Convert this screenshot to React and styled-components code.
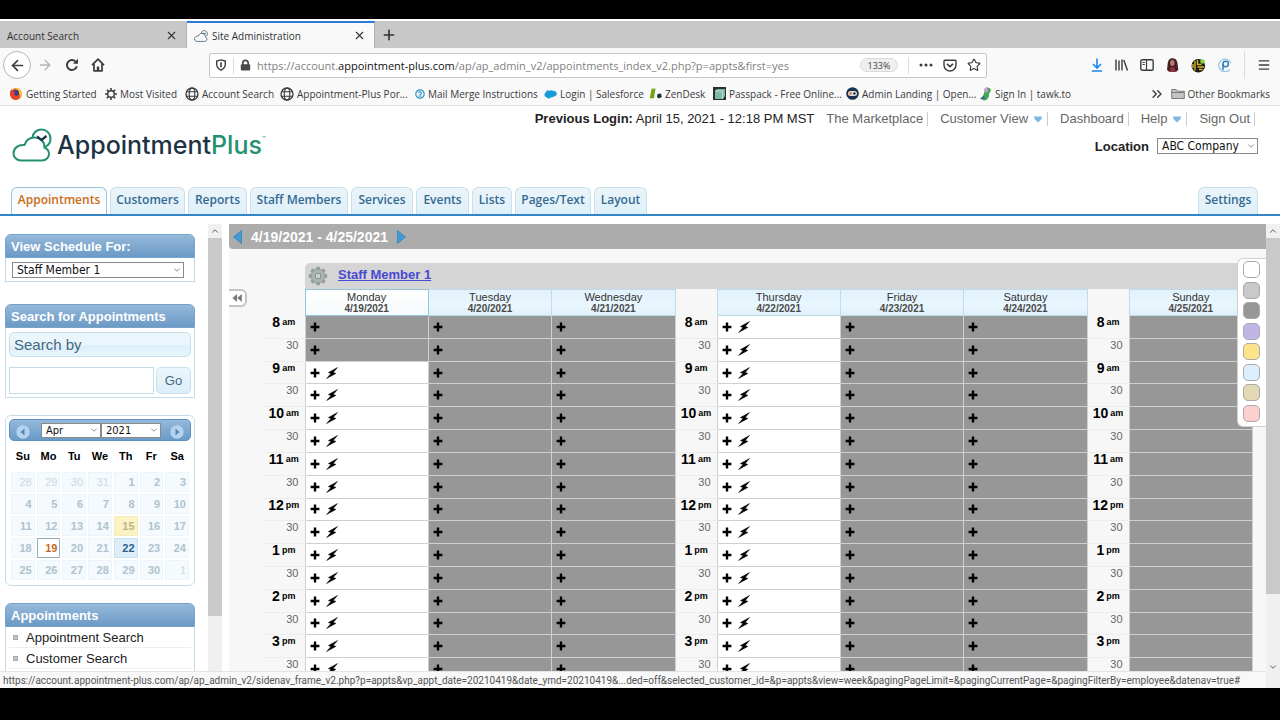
import React from "react";
import styled, { createGlobalStyle, css } from "styled-components";
import { ArrowLeft, ArrowRight, X, Plus, Star, Menu, ChevronDown, ChevronUp, ChevronsRight } from "lucide-react";

const ui = `"Open Sans", "Noto Sans", sans-serif`;
const arial = `"Liberation Sans", Arial, sans-serif`;
const tahoma = `"DejaVu Sans Condensed", "DejaVu Sans", sans-serif`;

const Global = createGlobalStyle`
  *, *::before { box-sizing: border-box; }
  body { margin: 0; background: #000; font-family: ${arial}; font-size: 13px; color: #222; }
  button, input, select { font: inherit; color: inherit; margin: 0; padding: 0; }
  button { background: none; border: 0; display: inline-flex; align-items: center; justify-content: center; }
  a { color: inherit; text-decoration: none; }
  svg { display: block; flex: none; }
  h2, ul { margin: 0; padding: 0; }
`;

const Screen = styled.div`
  height: 100vh;
  padding: 19px 0 32px;
  display: flex;
  flex-direction: column;
`;
const Window = styled.div`
  flex: 1;
  min-height: 0;
  display: flex;
  flex-direction: column;
  position: relative;
  overflow: hidden;
  background: #fff;
`;

/* ---------- browser chrome ---------- */
const TabStrip = styled.div`
  margin-top: 2px;
  height: 27px;
  flex: none;
  display: flex;
  background: #c8c8c8;
  font: 10px ${ui};
  color: #333;
`;
const BrowserTab = styled.div`
  width: ${(p) => (p.$active ? 188 : 187)}px;
  padding: 0 8px 0 7px;
  display: flex;
  align-items: center;
  gap: 4px;
  border-top: 2px solid ${(p) => (p.$active ? "#2a7bd8" : "transparent")};
  background: ${(p) => (p.$active ? "#f9f9fa" : "transparent")};
  border-right: 1px solid #b0b0b0;
  span { flex: 1; }
`;
const NewTab = styled.button`
  width: 27px;
`;
const Toolbar = styled.div`
  height: 34px;
  flex: none;
  display: flex;
  align-items: center;
  background: #f9f9fa;
  color: #3c3c3d;
  padding-left: 3px;
  padding-right: 9px;
`;
const NavButtons = styled.div`
  width: 206px;
  display: flex;
  align-items: center;
  gap: 12px;
`;
const BackButton = styled.button`
  width: 28px;
  height: 28px;
  margin-right: -6px;
  border: 1px solid #b5b5b5;
  border-radius: 50%;
  background: #fff;
`;
const AddressBar = styled.div`
  flex: 1;
  max-width: 778px;
  height: 25px;
  display: flex;
  align-items: center;
  gap: 10px;
  padding: 0 5px 0 5px;
  border: 1px solid #c6c6c6;
  border-radius: 2px;
  background: #fff;
  font: 11px ${ui};
  color: #808080;
`;
const Address = styled.div`
  flex: 1;
  min-width: 0;
  display: flex;
  align-items: center;
  gap: 6px;
  b { font-weight: 400; color: #111; }
  p { flex: 1; margin: 0; white-space: nowrap; overflow: hidden; }
`;
const ThinRule = styled.i`
  width: 1px;
  height: ${(p) => p.$h}px;
  background: #dcdcdc;
`;
const ZoomPill = styled.button`
  width: 38px;
  height: 14px;
  border: 1px solid #dadada;
  border-radius: 7px;
  background: #efefef;
  font-size: 9px;
  color: #444;
`;
const ToolIcons = styled.div`
  margin-left: auto;
  display: flex;
  align-items: center;
  gap: 12px;
`;
const Bookmarks = styled.div`
  height: 24px;
  flex: none;
  display: flex;
  align-items: center;
  background: #f9f9fa;
  border-bottom: 1px solid #e2e2e2;
  padding: 0 10px 0 9px;
  font: 10px ${ui};
  color: #3a3a3a;
`;
const Bookmark = styled.a`
  display: flex;
  align-items: center;
  gap: 3px;
  white-space: nowrap;
  width: ${(p) => (p.$w ? p.$w + "px" : "auto")};
`;
const Spacer = styled.div`
  flex: 1;
`;

/* ---------- site header ---------- */
const Header = styled.header`
  height: 110px;
  flex: none;
  display: flex;
  flex-direction: column;
  border-bottom: 2px solid #3385c6;
`;
const HeaderTop = styled.div`
  flex: 1;
  display: flex;
  justify-content: space-between;
`;
const Logo = styled.a`
  display: flex;
  align-items: center;
  align-self: flex-start;
  gap: 5px;
  margin: 21px 0 0 12px;
  font: 500 25px/36px Inter, sans-serif;
  color: #1d3344;
  em { font-style: normal; color: #259072; }
  sup { font-size: 6px; line-height: 6px; vertical-align: 13px; color: #259072; }
`;
const HeaderRight = styled.div`
  display: flex;
  flex-direction: column;
  align-items: flex-end;
  padding-top: 5px;
`;
const UtilityNav = styled.nav`
  display: flex;
  align-items: center;
  line-height: 16px;
  color: #666;
  padding-right: 25px;
`;
const LastLogin = styled.span`
  color: #222;
  margin-right: 12px;
`;
const UtilityLink = styled.a`
  display: flex;
  align-items: center;
  gap: 5px;
  padding-right: 4px;
  border-right: 1px solid #ccc;
  line-height: 14px;
  & + & { padding-left: 12px; }
`;
const LocationRow = styled.label`
  display: flex;
  align-items: center;
  gap: 8px;
  margin: 11px 22px 0 0;
  font-weight: 700;
`;
const SelectBox = styled.span`
  position: relative;
  display: block;
  width: ${(p) => p.$w};
  svg { position: absolute; right: 2px; top: 50%; margin-top: -5px; pointer-events: none; color: #777; }
`;
const Select = styled.select`
  appearance: none;
  display: block;
  width: 100%;
  height: ${(p) => p.$h || 16}px;
  padding: 0 4px;
  border: 1px solid #8a8a8a;
  border-radius: 0;
  background: #fff;
  color: #111;
  font: 400 ${(p) => p.$size || 12}px ${tahoma};
`;
const SiteTabs = styled.nav`
  display: flex;
  gap: 3px;
  padding: 0 22px 0 11px;
`;
const SiteTab = styled.a`
  width: ${(p) => p.$w}px;
  height: 27px;
  display: flex;
  align-items: center;
  justify-content: center;
  padding-bottom: 4px;
  border: 1px solid #c9dfea;
  border-bottom: 0;
  border-radius: 6px 6px 0 0;
  background: linear-gradient(#ebf4f9, #dff0fa);
  font: 600 12px ${ui};
  color: #336a93;
  ${(p) =>
    p.$active &&
    css`
      color: #cf6c16;
      border-color: #9cc3dd;
      background: linear-gradient(#f3f9fc, #fff);
    `}
  ${(p) => p.$end && css`margin-left: auto;`}
`;

/* ---------- frames ---------- */
const Frames = styled.div`
  flex: 1;
  min-height: 0;
  padding-top: 8px;
  display: flex;
`;
const Sidebar = styled.aside`
  width: 208px;
  padding: 10px 13px 0 5px;
  overflow: hidden;
`;
const Scroll = styled.div`
  width: ${(p) => p.$w}px;
  flex: none;
  display: flex;
  flex-direction: column;
  align-items: center;
  background: #f0f0f0;
  color: #444;
  margin-right: ${(p) => p.$gap || 0}px;
  padding-bottom: 14px;
  svg { margin: 2px 0; }
`;
const Thumb = styled.div`
  width: 100%;
  height: ${(p) => p.$h};
  background: #c9c9c9;
  margin-bottom: auto;
`;
const Panel = styled.section`
  margin-bottom: ${(p) => p.$gap}px;
`;
const PanelTitle = styled.h2`
  height: 24px;
  padding: 0 5px;
  border-radius: 6px 6px 0 0;
  background: linear-gradient(#95b9da, #6b9ac6);
  border: 1px solid #76a4c8;
  font-size: 13px;
  line-height: 24px;
  color: #fff;
`;
const PanelBody = styled.div`
  border: 1px solid #c3dcea;
  border-top: 0;
  padding: ${(p) => p.$pad};
`;
const SearchBy = styled.button`
  width: 100%;
  height: 25px;
  justify-content: flex-start;
  padding: 0 4px;
  border: 1px solid #c9e0ec;
  border-radius: 5px;
  background: linear-gradient(#ebf6fc 0 50%, #dceffa 55%, #e8f5fd);
  font-size: 15px;
  color: #44687f;
`;
const SearchRow = styled.div`
  display: flex;
  gap: 2px;
  margin-top: 10px;
`;
const SearchInput = styled.input`
  flex: 1;
  min-width: 0;
  height: 27px;
  border: 1px solid #c3dcea;
  background: #fff;
`;
const GoButton = styled.button`
  width: 35px;
  border: 1px solid #c9e0ec;
  border-radius: 5px;
  background: linear-gradient(#eaf6fd, #dbeef9);
  color: #44687f;
`;
const DatePicker = styled.section`
  height: 171px;
  margin-bottom: 17px;
  padding: 3px;
  border: 1px solid #c3dcea;
  border-radius: 6px;
`;
const PickerHead = styled.div`
  height: 22px;
  padding: 0 6px;
  display: flex;
  align-items: center;
  border-radius: 5px;
  border: 1px solid #5c93c4;
  background: linear-gradient(#94b9db, #6a9ac7);
  button { margin-top: 3px; }
  button:first-child { margin-right: 11px; }
  button:last-child { margin-left: auto; }
`;
const MonthTable = styled.table`
  width: 100%;
  table-layout: fixed;
  border-collapse: separate;
  border-spacing: 2px;
  font-size: 11px;
  color: #000;
  th { height: 27px; padding: 0 0 2px; }
`;
const Day = styled.td`
  height: 20px;
  padding: 0 2px 0 0;
  text-align: right;
  font-size: 11px;
  font-weight: ${(p) => (p.$kind === "out" ? 400 : 700)};
  color: ${(p) => (p.$kind === "out" ? "#ccd9e0" : "#afc3cf")};
  background: #f4fafd;
  border: 1px solid #eef5f9;
  ${(p) => p.$kind === "today" && css`background: #fbf3c4; color: #bdb391; border-color: #f6ecb8;`}
  ${(p) => p.$kind === "picked" && css`background: #fff; color: #c46a1c; border-color: #8fb3c4;`}
  ${(p) => p.$kind === "link" && css`background: #dceefa; color: #2c5d88; border-color: #c8e0ee;`}
`;
const LinkList = styled.ul`
  list-style: none;
  border: 1px solid #c3dcea;
  border-top: 0;
  li {
    height: 21px;
    display: flex;
    align-items: center;
    gap: 8px;
    margin: 0 3px;
    padding-left: 4px;
    border-bottom: 1px solid #eee;
  }
  li::before { content: ""; width: 5px; height: 5px; background: #c4c4c4; border: 1px solid #aaa; }
`;

/* ---------- schedule ---------- */
const Main = styled.main`
  flex: 1;
  min-width: 0;
  position: relative;
  overflow: hidden;
  background: #f7f7f7;
`;
const WeekBar = styled.div`
  height: 25px;
  display: flex;
  align-items: center;
  gap: 9px;
  padding-left: 4px;
  border-radius: 0 0 0 4px;
  background: #acacac;
  color: #fff;
  font-weight: 700;
  font-size: 14px;
`;
const Schedule = styled.div`
  display: flex;
  padding: 14px 13px 0 0;
`;
const Gutter = styled.div`
  width: 34px;
  padding-top: 26px;
`;
const Collapse = styled.button`
  width: 18px;
  height: 18px;
  border: 2px solid #c4c4c4;
  border-left: 0;
  border-radius: 0 6px 6px 0;
  background: #fff;
  color: #777;
`;
const Board = styled.div`
  flex: 1;
`;
const StaffBar = styled.div`
  height: 26px;
  margin-left: 42px;
  padding-left: 3px;
  display: flex;
  align-items: center;
  gap: 10px;
  border-radius: 5px 0 0 0;
  background: #d5d5d5;
  a { font-weight: 700; color: #4a48d4; text-decoration: underline; line-height: 16px; padding-bottom: 2px; }
`;
const WeekTable = styled.table`
  width: 100%;
  height: 392px;
  table-layout: fixed;
  border-collapse: collapse;
`;
const TimeCol = styled.col`
  width: 42px;
`;
const DayHead = styled.th`
  height: 26px;
  padding: 0;
  border: 1px solid ${(p) => (p.$active ? "#93c5dd" : "#bddcec")};
  background: ${(p) => (p.$active ? "linear-gradient(#fff, #f4fafc)" : "linear-gradient(#e2f2fb, #e9f6fd 60%, #dff0fa)")};
  font-size: 11px;
  font-weight: 400;
  line-height: 12px;
  color: #333;
  time { display: block; font-size: 10px; font-weight: 700; color: #4a4a4a; }
`;
const Slot = styled.td`
  padding: 0 0 0 4px;
  border: 1px solid #cfcfcf;
  background: ${(p) => (p.$open ? "#fff" : "#979797")};
  div { display: flex; gap: 6px; align-items: center; height: 14px; }
`;
const TimeCell = styled.th`
  padding: 0 6px 0 0;
  border-bottom: 1px solid #ededed;
  vertical-align: top;
  text-align: right;
  font-size: 11px;
  font-weight: 400;
  line-height: 13px;
  color: #666;
  ${(p) =>
    p.$hour &&
    css`
      padding: 0;
      text-align: center;
      font-size: 14px;
      font-weight: 700;
      color: #000;
      small { font-size: 9px; line-height: 9px; margin-left: 2px; vertical-align: 2px; }
    `}
`;
const Legend = styled.div`
  position: absolute;
  top: 34px;
  right: 0;
  width: 29px;
  height: 169px;
  padding: 2px 5px 4px;
  display: flex;
  flex-direction: column;
  justify-content: space-between;
  border: 1px solid #d0d0d0;
  border-right: 0;
  border-radius: 6px 0 0 6px;
  background: #fff;
`;
const Swatch = styled.button`
  width: 17px;
  height: 17px;
  border: 1px solid #aaa;
  border-radius: 5px;
  background: ${(p) => p.$c};
`;
const StatusBar = styled.div`
  position: absolute;
  left: 0;
  right: 15px;
  bottom: 0;
  height: 17px;
  padding-left: 3px;
  background: #f8f8f8;
  border-top: 1px solid #e4e4e4;
  font: 10px/17px Roboto, ${ui};
  color: #555;
  white-space: nowrap;
  overflow: hidden;
`;

/* ---------- drawings ---------- */
const Svg = ({ w, h, vb, children }) => (
  <svg width={w} height={h || w} viewBox={vb || `0 0 ${w} ${h || w}`} fill="none" aria-hidden="true">
    {children}
  </svg>
);
const CloudLogo = ({ w, h, a = "#259072", b = "#1d3344", sw = 2 }) => (
  <Svg w={w} h={h} vb="0 0 40 34">
    <path d="M9 32.500h21c4 0 7-3 7-6.500 0-3.200-2-5.500-4.500-6.300C32.500 13 28 9.500 22.500 9.500c-5 0-8.500 2.800-10 7.500-6-.8-11 3-11 8.500 0 4 3.500 7 7.500 7z" stroke={a} strokeWidth={sw} />
    <path d="M20.500 9.500C21 4.500 25 1.500 29.500 1.500c5 0 9 4 9 9 0 4-2 7-5.500 8.500" stroke={a} strokeWidth={sw} />
    <path d="M25 8.500l4.500 3.500 5-4" stroke={b} strokeWidth={sw + 0.3} />
  </Svg>
);
const Reload = () => (
  <Svg w={14}>
    <path d="M11.800 8.200A5 5 0 1 1 10.600 3.600" stroke="#3c3c3d" strokeWidth="1.900" />
    <path d="M13 .8v5H8z" fill="#3c3c3d" />
  </Svg>
);
const HomeIcon = () => (
  <Svg w={14}>
    <path d="M1 7.200L7 1.200l6 6M3 6v6.800h8V6" stroke="#3c3c3d" strokeWidth="1.700" strokeLinejoin="round" />
    <path d="M5.800 13V8.500h2.400V13z" fill="#3c3c3d" />
  </Svg>
);
const ShieldIcon = () => (
  <Svg w={12}>
    <path d="M6 .9l4.300 1.200v3.200c0 2.800-1.700 4.700-4.300 5.900C3.400 10 1.700 8.100 1.700 5.300V2.100z" stroke="#3c3c3d" strokeWidth="1.400" />
    <path d="M6 3.200v5" stroke="#3c3c3d" strokeWidth="1.600" />
  </Svg>
);
const LockIcon = () => (
  <Svg w={11} h={12}>
    <path d="M2.800 6V4a2.700 2.700 0 0 1 5.400 0v2" stroke="#4a4a4b" strokeWidth="1.700" />
    <rect x=".8" y="5.300" width="9.400" height="6.200" rx="1" fill="#4a4a4b" />
  </Svg>
);
const PocketIcon = () => (
  <Svg w={14} h={13}>
    <path d="M1.800 1.200h10.400c.5 0 .8.3.8.8v4a6 6 0 0 1-12 0V2c0-.5.300-.8.800-.8z" stroke="#3c3c3d" strokeWidth="1.400" />
    <path d="M4 4.800l3 2.900 3-2.900" stroke="#3c3c3d" strokeWidth="1.600" />
  </Svg>
);
const Dots = () => (
  <Svg w={14} h={4}>
    {[2, 7, 12].map((x) => <circle key={x} cx={x} cy="2" r="1.500" fill="#3c3c3d" />)}
  </Svg>
);
const DownloadIcon = () => (
  <Svg w={12} h={14}>
    <path d="M6 .5v9M2 6l4 4 4-4M.8 13h10.400" stroke="#1a86f0" strokeWidth="1.600" />
  </Svg>
);
const LibraryIcon = () => (
  <Svg w={13} h={12}>
    <path d="M1 .5v11M4 1.500v10M7 .5v11M8.800 1l3.700 10.500" stroke="#3c3c3d" strokeWidth="1.400" />
  </Svg>
);
const SidebarIcon = () => (
  <Svg w={14} h={12}>
    <rect x=".8" y=".8" width="12.400" height="10.400" rx="1.500" stroke="#3c3c3d" strokeWidth="1.400" />
    <path d="M6.500 1v10M2.500 3.500h2.300M2.500 5.500h2.300" stroke="#3c3c3d" strokeWidth="1.200" />
  </Svg>
);
const Portrait = () => (
  <Svg w={13} h={14}>
    <path d="M6.500.3c3.500 0 5 2.800 5.200 6.500l.6 4.900-2 2H3l-2-2 .6-4.900C1.800 3 3.200.3 6.500.3z" fill="#4a1f22" />
    <ellipse cx="6.300" cy="5" rx="2.200" ry="3" fill="#b5806f" />
    <path d="M3.500 13.700l1-4.200h4l1 4.200z" fill="#8d2f3d" />
  </Svg>
);
const StripeBadge = () => (
  <Svg w={15}>
    <circle cx="7.300" cy="7.700" r="6.800" fill="#1b1a12" />
    <path d="M4 3v9.500M6.500 2v4.500h4M6.500 9H13M8 11.500h3.500M2 6v4" stroke="#d9b52a" strokeWidth="1.400" />
    <circle cx="11.500" cy="3.500" r="2.300" fill="#8bd040" />
  </Svg>
);
const PBadge = () => (
  <Svg w={14}>
    <path d="M11.800 11.600A6.300 6.300 0 1 1 13 5.200" stroke="#8fc6e6" strokeWidth="1.200" />
    <circle cx="7.700" cy="6" r="2.700" stroke="#2b7fb4" strokeWidth="1.500" />
    <path d="M5 6v6" stroke="#2b7fb4" strokeWidth="1.500" />
  </Svg>
);
const Firefox = () => (
  <Svg w={14}>
    <circle cx="7" cy="7" r="6" fill="#f07b1e" />
    <path d="M7 1c3.500 0 6 2.600 6 6 0 1.500-.5 3-1.500 4C12 7 9 6 7 1z" fill="#fbc52d" />
    <circle cx="6.800" cy="6" r="3.300" fill="#3d3a8c" />
    <path d="M1 6c0-1.500.8-3 1.700-3.700C3 4 5 4.500 6.500 5.500 4.500 6 5 8.500 7.500 8.700 10 9 10 7.500 11 7.500 10.500 11 8 13 6 12.800 3 12.500 1 10 1 6z" fill="#e2432b" />
  </Svg>
);
const GearOutline = () => (
  <Svg w={12}>
    <circle cx="6" cy="6" r="3.300" stroke="#3c3c3d" strokeWidth="1.400" />
    <path d="M6 0v2.500M6 9.500V12M0 6h2.500M9.500 6H12M1.800 1.800l1.700 1.700M8.500 8.500l1.700 1.700M1.800 10.200l1.700-1.700M8.500 3.500l1.700-1.700" stroke="#3c3c3d" strokeWidth="1.600" />
  </Svg>
);
const GlobeIcon = () => (
  <Svg w={14}>
    <circle cx="7" cy="7" r="6" stroke="#3c3c3d" strokeWidth="1.300" />
    <ellipse cx="7" cy="7" rx="2.800" ry="6" stroke="#3c3c3d" strokeWidth="1.100" />
    <path d="M1.500 4.800h11M1.500 9.200h11" stroke="#3c3c3d" strokeWidth="1.100" />
  </Svg>
);
const MergeIcon = () => (
  <Svg w={10}>
    <circle cx="5" cy="5" r="4.200" stroke="#2f93c4" strokeWidth="1.200" />
    <path d="M3.200 3.700c.8-1.200 3.300-1 3.300.5 0 1-1.500 1-1.500 1.800M3.500 7h3" stroke="#2f93c4" strokeWidth="1.100" />
  </Svg>
);
const Salesforce = () => (
  <Svg w={13} h={10}>
    <path d="M3 8.500C1 8.300.2 6.800.5 5.300.8 4 1.500 3.500 2 3.200 2 1.500 4.500.5 5.800 1.800 7 .8 8.500 1 9.300 2c2-.5 3.500.8 3.500 2.700S11 7.700 9.800 7.300C9 8.700 7.500 8.700 6.800 8.200 6 9.800 3.500 9.800 3 8.500z" fill="#189bd8" />
  </Svg>
);
const ZenDesk = () => (
  <Svg w={13} h={11}>
    <path d="M2.500.8l4-.3L5 10.300H.7z" fill="#77a31a" />
    <path d="M8.500 6l3.500-.5.8 3.500-3 1.500L8 9z" fill="#10303a" />
  </Svg>
);
const Passpack = () => (
  <Svg w={13}>
    <path d="M0 0h13v13H0z" fill="#28302e" />
    <path d="M2 4l2-2h8v7l-2 3H2z" fill="#7fb8a6" />
    <path d="M2 4h7.500v8" stroke="#b9e0d2" />
  </Svg>
);
const AdminMark = () => (
  <Svg w={13}>
    <circle cx="6.500" cy="6.500" r="6.300" fill="#17314f" />
    <rect x="2" y="4" width="9" height="5" rx="2.500" fill="#e8e1d3" />
    <circle cx="4.600" cy="6.500" r="1.200" fill="#c46a3c" />
    <circle cx="8.400" cy="6.500" r="1.200" fill="#17314f" />
  </Svg>
);
const Parrot = () => (
  <Svg w={13} h={14}>
    <path d="M6 1c3-1.200 6 .3 6 2.500L10 7c.5 3-1.500 6-5 6.500L1 11.500l3-1z" fill="#43a85a" />
    <path d="M5 2.500C6 .8 8.500.5 9 2.500S7 6 5.500 5.500z" fill="#d69ad2" />
    <path d="M1 12l4-4 1 4z" fill="#2f6f86" />
  </Svg>
);
const FolderIcon = () => (
  <Svg w={14} h={12}>
    <path d="M.7 10.500v-9h4.500l1.200 1.700h6.900v7.300z" fill="#c4c4c4" stroke="#7b7b7b" />
    <path d="M.7 4.500h12.600" stroke="#7b7b7b" />
  </Svg>
);
const DropMark = () => (
  <Svg w={10} h={7}>
    <path d="M1 .5h8L8.500 3 5 6.500 1.500 3z" fill="#7db8df" />
  </Svg>
);
const PagerMark = ({ right }) => (
  <Svg w={14}>
    <circle cx="7" cy="7" r="6.700" fill="#b3d3ee" />
    <path d={right ? "M5.500 3.500v7L9.500 7z" : "M8.500 3.500v7L4.500 7z"} fill="#5785b5" />
  </Svg>
);
const WeekArrow = ({ right }) => (
  <Svg w={9} h={14}>
    <path d={right ? "M.5.500v13l8-6.500z" : "M8.500.5v13l-8-6.500z"} fill="#3f9bd6" stroke="#2279b5" strokeWidth=".6" />
  </Svg>
);
const Rewind = () => (
  <Svg w={10} h={8}>
    <path d="M5 0v8L.5 4zM9.800 0v8L5.300 4z" fill="#777" />
  </Svg>
);
const StaffGear = () => (
  <Svg w={20} vb="-10 -10 20 20">
    {[0, 45, 90, 135].map((a) => (
      <rect key={a} x="-2" y="-9.200" width="4" height="18.400" rx="1" fill="#93a09e" transform={`rotate(${a})`} />
    ))}
    <circle r="7" fill="#a9b4b2" stroke="#8b9896" strokeWidth=".8" />
    <rect x="-2.500" y="-2.500" width="5" height="5" rx="1" fill="#c8cfcd" stroke="#83908e" />
  </Svg>
);
const PlusMark = () => (
  <Svg w={10}>
    <path d="M5 .6v8.800M.6 5h8.800" stroke="#000" strokeWidth="2.400" />
  </Svg>
);
const Bolt = () => (
  <Svg w={12}>
    <path d="M11.500.5L2.400 5.600l2.600.9L.6 11.500 9.900 6.400l-2.700-1z" fill="#000" stroke="#000" strokeWidth=".5" strokeLinejoin="round" />
  </Svg>
);

/* ---------- data ---------- */
const siteTabs = [
  ["Appointments", 96], ["Customers", 75], ["Reports", 59], ["Staff Members", 98], ["Services", 62],
  ["Events", 53], ["Lists", 40], ["Pages/Text", 76], ["Layout", 53],
];
const bookmarks = [
  [Firefox, "Getting Started", 96], [GearOutline, "Most Visited", 80], [GlobeIcon, "Account Search", 95],
  [GlobeIcon, "Appointment-Plus Por...", 135], [MergeIcon, "Mail Merge Instructions", 129],
  [Salesforce, "Login | Salesforce", 105], [ZenDesk, "ZenDesk", 64], [Passpack, "Passpack - Free Online...", 133],
  [AdminMark, "Admin Landing | Open...", 133], [Parrot, "Sign In | tawk.to", 100],
];
const columns = [
  null, ["Monday", "4/19/2021"], ["Tuesday", "4/20/2021"], ["Wednesday", "4/21/2021"],
  null, ["Thursday", "4/22/2021"], ["Friday", "4/23/2021"], ["Saturday", "4/24/2021"],
  null, ["Sunday", "4/25/2021"],
];
const hours = ["8 am", "9 am", "10 am", "11 am", "12 pm", "1 pm", "2 pm", "3 pm"];
const slots = hours.flatMap((h) => [h, "30"]);
const isOpen = (day, row) => day === "Thursday" || (day === "Monday" && row > 1);
const legend = ["#fff", "#c9c9c9", "#979797", "#c1b5e6", "#ffe38b", "#dceefc", "#e3d9b3", "#fdd0d0"];
const weeks = [
  [28, 29, 30, 31, 1, 2, 3], [4, 5, 6, 7, 8, 9, 10], [11, 12, 13, 14, 15, 16, 17],
  [18, 19, 20, 21, 22, 23, 24], [25, 26, 27, 28, 29, 30, 1],
];
const dayKind = (d, w) => {
  if ((w === 0 && d > 20) || (w === 4 && d < 20)) return "out";
  return { 15: "today", 19: "picked", 22: "link" }[d];
};

const Dropdown = ({ label, value, w, h, size }) => (
  <SelectBox $w={w}>
    <Select aria-label={label} defaultValue={value} $h={h} $size={size}>
      <option>{value}</option>
    </Select>
    <ChevronDown size={10} strokeWidth={2} />
  </SelectBox>
);

function BrowserChrome() {
  return (
    <>
      <TabStrip>
        <BrowserTab><span>Account Search</span><button aria-label="Close tab"><X size={13} /></button></BrowserTab>
        <BrowserTab $active>
          <CloudLogo w={14} h={12} a="#55707f" b="#55707f" sw={2.600} />
          <span>Site Administration</span>
          <button aria-label="Close tab"><X size={13} /></button>
        </BrowserTab>
        <NewTab aria-label="New tab"><Plus size={16} strokeWidth={2.400} /></NewTab>
      </TabStrip>
      <Toolbar>
        <NavButtons>
          <BackButton aria-label="Back"><ArrowLeft size={17} strokeWidth={2.400} /></BackButton>
          <button aria-label="Forward"><ArrowRight size={16} color="#b5b5b5" /></button>
          <button aria-label="Reload"><Reload /></button>
          <button aria-label="Home"><HomeIcon /></button>
        </NavButtons>
        <AddressBar>
          <Address>
            <ShieldIcon />
            <ThinRule $h={17} />
            <LockIcon />
            <p>https://account.<b>appointment-plus.com</b>/ap/ap_admin_v2/appointments_index_v2.php?p=appts&amp;first=yes</p>
          </Address>
          <ZoomPill>133%</ZoomPill>
          <ThinRule $h={17} />
          <Dots />
          <PocketIcon />
          <Star size={14} color="#3c3c3d" />
        </AddressBar>
        <ToolIcons>
          <DownloadIcon />
          <LibraryIcon />
          <SidebarIcon />
          <Portrait />
          <StripeBadge />
          <PBadge />
          <ThinRule $h={28} />
          <button aria-label="Open menu"><Menu size={14} strokeWidth={2.400} /></button>
        </ToolIcons>
      </Toolbar>
      <Bookmarks>
        {bookmarks.map(([Icon, text, w]) => (
          <Bookmark key={text} href="#" $w={w}><Icon />{text}</Bookmark>
        ))}
        <Spacer />
        <Bookmark href="#" aria-label="More bookmarks" $w={22}><ChevronsRight size={16} /></Bookmark>
        <Bookmark href="#"><FolderIcon />Other Bookmarks</Bookmark>
      </Bookmarks>
    </>
  );
}

function SiteHeader() {
  return (
    <Header>
      <HeaderTop>
        <Logo href="#">
          <CloudLogo w={40} h={34} />
          <span>Appointment<em>Plus</em><sup>™</sup></span>
        </Logo>
        <HeaderRight>
          <UtilityNav>
            <LastLogin><b>Previous Login:</b> April 15, 2021 - 12:18 PM MST</LastLogin>
            <UtilityLink href="#">The Marketplace</UtilityLink>
            <UtilityLink href="#">Customer View <DropMark /></UtilityLink>
            <UtilityLink href="#">Dashboard</UtilityLink>
            <UtilityLink href="#">Help <DropMark /></UtilityLink>
            <UtilityLink href="#">Sign Out</UtilityLink>
          </UtilityNav>
          <LocationRow>Location <Dropdown label="Location" value="ABC Company" w="101px" /></LocationRow>
        </HeaderRight>
      </HeaderTop>
      <SiteTabs>
        {siteTabs.map(([t, w], i) => <SiteTab key={t} href="#" $w={w} $active={i === 0}>{t}</SiteTab>)}
        <SiteTab href="#" $w={60} $end>Settings</SiteTab>
      </SiteTabs>
    </Header>
  );
}

function SideNav() {
  return (
    <Sidebar>
      <Panel $gap={22}>
        <PanelTitle>View Schedule For:</PanelTitle>
        <PanelBody $pad="4px 10px 3px 6px"><Dropdown label="View schedule for" value="Staff Member 1" w="100%" /></PanelBody>
      </Panel>
      <Panel $gap={17}>
        <PanelTitle>Search for Appointments</PanelTitle>
        <PanelBody $pad="4px 3px 3px">
          <SearchBy>Search by</SearchBy>
          <SearchRow>
            <SearchInput aria-label="Search appointments" />
            <GoButton>Go</GoButton>
          </SearchRow>
        </PanelBody>
      </Panel>
      <DatePicker>
        <PickerHead>
          <button aria-label="Previous month"><PagerMark /></button>
          <Dropdown label="Month" value="Apr" w="60px" h={15} size={11} />
          <Dropdown label="Year" value="2021" w="60px" h={15} size={11} />
          <button aria-label="Next month"><PagerMark right /></button>
        </PickerHead>
        <MonthTable>
          <thead>
            <tr>{["Su", "Mo", "Tu", "We", "Th", "Fr", "Sa"].map((d) => <th key={d}>{d}</th>)}</tr>
          </thead>
          <tbody>
            {weeks.map((w, i) => (
              <tr key={i}>{w.map((d) => <Day key={d} $kind={dayKind(d, i)}>{d}</Day>)}</tr>
            ))}
          </tbody>
        </MonthTable>
      </DatePicker>
      <Panel $gap={0}>
        <PanelTitle>Appointments</PanelTitle>
        <LinkList>
          <li><a href="#">Appointment Search</a></li>
          <li><a href="#">Customer Search</a></li>
          <li />
        </LinkList>
      </Panel>
    </Sidebar>
  );
}

function Cell({ column, label, row }) {
  if (!column) {
    if (label === "30") return <TimeCell>30</TimeCell>;
    const [n, half] = label.split(" ");
    return <TimeCell $hour>{n}<small>{half}</small></TimeCell>;
  }
  const [day] = column;
  const open = isOpen(day, row);
  return (
    <Slot $open={open}>
      {day !== "Sunday" && (
        <div>
          <button aria-label="Add appointment"><PlusMark /></button>
          {open && <button aria-label="Quick add"><Bolt /></button>}
        </div>
      )}
    </Slot>
  );
}

function WeekView() {
  return (
    <Main>
      <WeekBar>
        <button aria-label="Previous week"><WeekArrow /></button>
        <span>4/19/2021 - 4/25/2021</span>
        <button aria-label="Next week"><WeekArrow right /></button>
      </WeekBar>
      <Schedule>
        <Gutter><Collapse aria-label="Collapse sidebar"><Rewind /></Collapse></Gutter>
        <Board>
          <StaffBar><StaffGear /><a href="#">Staff Member 1</a></StaffBar>
          <WeekTable>
            <colgroup>{columns.map((c, i) => (c ? <col key={i} /> : <TimeCol key={i} />))}</colgroup>
            <thead>
              <tr>
                {columns.map((c, i) =>
                  c ? <DayHead key={i} $active={i === 1}>{c[0]}<time>{c[1]}</time></DayHead> : <td key={i} />
                )}
              </tr>
            </thead>
            <tbody>
              {slots.map((s, r) => (
                <tr key={r}>{columns.map((c, i) => <Cell key={i} column={c} label={s} row={r} />)}</tr>
              ))}
            </tbody>
          </WeekTable>
        </Board>
      </Schedule>
      <Legend>{legend.map((c) => <Swatch key={c} $c={c} aria-label="Status colour" />)}</Legend>
    </Main>
  );
}

export default function App() {
  return (
    <Screen>
      <Global />
      <Window>
        <BrowserChrome />
        <SiteHeader />
        <Frames>
          <SideNav />
          <Scroll $w={14} $gap={7}><ChevronUp size={10} /><Thumb $h="84%" /></Scroll>
          <WeekView />
          <Scroll $w={14}><ChevronUp size={10} /><Thumb $h="79%" /><ChevronDown size={10} /></Scroll>
        </Frames>
        <StatusBar>
          https://account.appointment-plus.com/ap/ap_admin_v2/sidenav_frame_v2.php?p=appts&amp;vp_appt_date=20210419&amp;date_ymd=20210419&amp;...ded=off&amp;selected_customer_id=&amp;p=appts&amp;view=week&amp;pagingPageLimit=&amp;pagingCurrentPage=&amp;pagingFilterBy=employee&amp;datenav=true#
        </StatusBar>
      </Window>
    </Screen>
  );
}
